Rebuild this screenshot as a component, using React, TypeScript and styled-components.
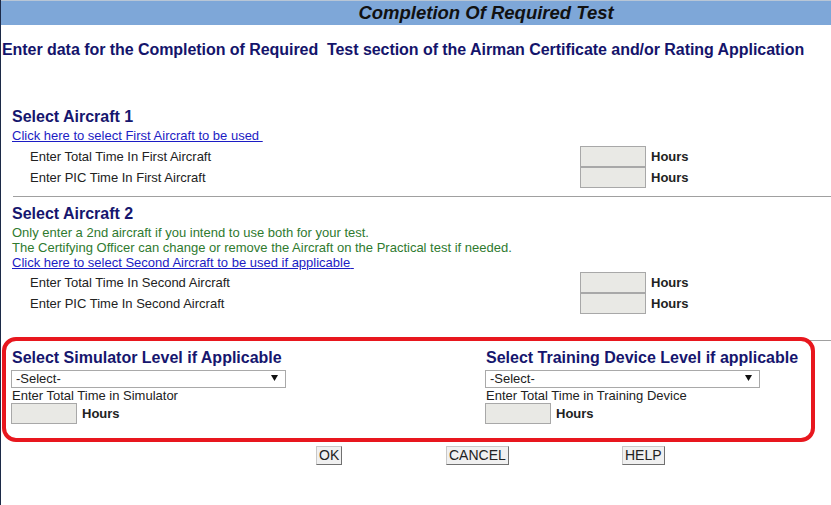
import React from 'react';
import styled, { createGlobalStyle } from 'styled-components';

const GlobalStyle = createGlobalStyle`
  html, body {
    margin: 0;
    padding: 0;
    background: #ffffff;
  }
  body {
    font-family: "Liberation Sans", Arial, sans-serif;
  }
`;

const Page = styled.div`
  min-height: 505px;
  border-left: 1px solid #1c2a48;
  overflow: hidden;
`;

const Header = styled.div`
  height: 24px;
  border-top: 1px solid #b8c6d6;
  background-color: #7ea7d8;
  padding-left: 140px;
  text-align: center;
  font-style: italic;
  font-weight: bold;
  font-size: 18.5px;
  line-height: 24px;
  color: #111;
`;

const Intro = styled.div`
  margin: 15px 0 0 1px;
  font-size: 16px;
  line-height: 20px;
  font-weight: bold;
  letter-spacing: -0.05px;
  color: #14146b;
  white-space: nowrap;
`;

const Section = styled.div<{ $top: number }>`
  margin-top: ${(p) => p.$top}px;
  padding-left: 11px;
`;

const Title = styled.div`
  font-size: 16px;
  line-height: 18px;
  font-weight: bold;
  color: #16166e;
  white-space: nowrap;
`;

const Link = styled.a<{ $top?: number }>`
  display: block;
  margin-top: ${(p) => p.$top ?? 2}px;
  font-size: 13px;
  line-height: 15px;
  color: #1c1cc4;
  text-decoration: underline;
  white-space: pre;
`;

const Note = styled.div`
  font-size: 13px;
  line-height: 15px;
  color: #2f7a2f;
  white-space: nowrap;
`;

const Notes = styled.div`
  margin-top: 2px;
`;

const Rows = styled.div<{ $top: number }>`
  margin-top: ${(p) => p.$top}px;
  padding-left: 29px;
`;

const TimeRow = styled.div`
  display: grid;
  grid-template-columns: 545px 66px auto;
  column-gap: 5px;
  align-items: center;
  height: 21px;
`;

const Label = styled.span`
  font-size: 13px;
  line-height: 15px;
  color: #222;
  white-space: nowrap;
`;

const HoursInput = styled.input`
  box-sizing: border-box;
  width: 66px;
  height: 21px;
  margin: 0;
  border: 1px solid #a8a8a8;
  background-color: #e9e9e5;
  font: inherit;
`;

const Hours = styled.span`
  font-size: 13px;
  font-weight: bold;
  color: #222;
`;

const Rule = styled.hr<{ $top: number }>`
  margin: ${(p) => p.$top}px 0 0 12px;
  border: 0;
  border-top: 1px solid #a0a0a0;
  height: 0;
`;

const Highlight = styled.div`
  box-sizing: border-box;
  width: 813px;
  margin: -4px 0 0 1px;
  border: 4px solid #e8171e;
  border-radius: 14px;
  padding: 8px 0 14px 6px;
  display: grid;
  grid-template-columns: 474px auto;
`;

const LevelColumn = styled.div`
  display: flex;
  flex-direction: column;
  align-items: flex-start;
`;

const SelectWrap = styled.div<{ $width: number }>`
  position: relative;
  margin: 2px 0 0 -1px;
  width: ${(p) => p.$width}px;
`;

const Select = styled.select`
  box-sizing: border-box;
  width: 100%;
  height: 18px;
  margin: 0;
  padding: 0 0 0 4px;
  appearance: none;
  border: 1px solid #a9a9a9;
  border-radius: 0;
  background: #fff;
  font-family: "Liberation Sans", Arial, sans-serif;
  font-size: 13px;
  color: #222;
`;

const Arrow = styled.svg`
  position: absolute;
  right: 8px;
  top: 6px;
  pointer-events: none;
`;

const InlineHours = styled.div`
  display: flex;
  align-items: center;
  gap: 5px;
  margin-left: -1px;
`;

const ButtonRow = styled.div`
  margin-top: 4px;
  padding-left: 315px;
  display: grid;
  grid-template-columns: 130px 176px auto;
  align-items: start;
`;

const Button = styled.button`
  justify-self: start;
  margin: 0;
  padding: 0 2px;
  height: 19px;
  font-family: "Liberation Sans", Arial, sans-serif;
  font-size: 14px;
  line-height: 17px;
  color: #222;
  background: #f0f0f0;
  border: 1px solid;
  border-color: #c8c8c8 #707070 #707070 #c8c8c8;
  border-radius: 0;
`;

const TimeLine: React.FC<{ label: string }> = ({ label }) => (
  <TimeRow>
    <Label>{label}</Label>
    <HoursInput type="text" />
    <Hours>Hours</Hours>
  </TimeRow>
);

const LevelPicker: React.FC<{ title: string; label: string; width: number }> = ({
  title,
  label,
  width,
}) => (
  <LevelColumn>
    <Title>{title}</Title>
    <SelectWrap $width={width}>
      <Select defaultValue="">
        <option value="">-Select-</option>
      </Select>
      <Arrow width="7" height="6" viewBox="0 0 7 6">
        <polygon points="0,0 7,0 3.5,6" fill="#111" />
      </Arrow>
    </SelectWrap>
    <Label>{label}</Label>
    <InlineHours>
      <HoursInput type="text" />
      <Hours>Hours</Hours>
    </InlineHours>
  </LevelColumn>
);

const App: React.FC = () => {
  return (
    <Page>
      <GlobalStyle />
      <Header>Completion Of Required Test</Header>
      <Intro>
        Enter data for the Completion of Required&nbsp; Test section of the Airman Certificate
        and/or Rating Application
      </Intro>

      <Section $top={48}>
        <Title>Select Aircraft 1</Title>
        <Link href="#">Click here to select First Aircraft to be used </Link>
      </Section>
      <Rows $top={3}>
        <TimeLine label="Enter Total Time In First Aircraft" />
        <TimeLine label="Enter PIC Time In First Aircraft" />
      </Rows>

      <Rule $top={8} />

      <Section $top={8}>
        <Title>Select Aircraft 2</Title>
        <Notes>
          <Note>Only enter a 2nd aircraft if you intend to use both for your test.</Note>
          <Note>The Certifying Officer can change or remove the Aircraft on the Practical test if needed.</Note>
        </Notes>
        <Link href="#" $top={0}>
          Click here to select Second Aircraft to be used if applicable{' '}
        </Link>
      </Section>
      <Rows $top={2}>
        <TimeLine label="Enter Total Time In Second Aircraft" />
        <TimeLine label="Enter PIC Time In Second Aircraft" />
      </Rows>

      <Rule $top={26} />

      <Highlight>
        <LevelPicker
          title="Select Simulator Level if Applicable"
          label="Enter Total Time in Simulator"
          width={275}
        />
        <LevelPicker
          title="Select Training Device Level if applicable"
          label="Enter Total Time in Training Device"
          width={275}
        />
      </Highlight>

      <ButtonRow>
        <Button type="button">OK</Button>
        <Button type="button">CANCEL</Button>
        <Button type="button">HELP</Button>
      </ButtonRow>
    </Page>
  );
};

export default App;
